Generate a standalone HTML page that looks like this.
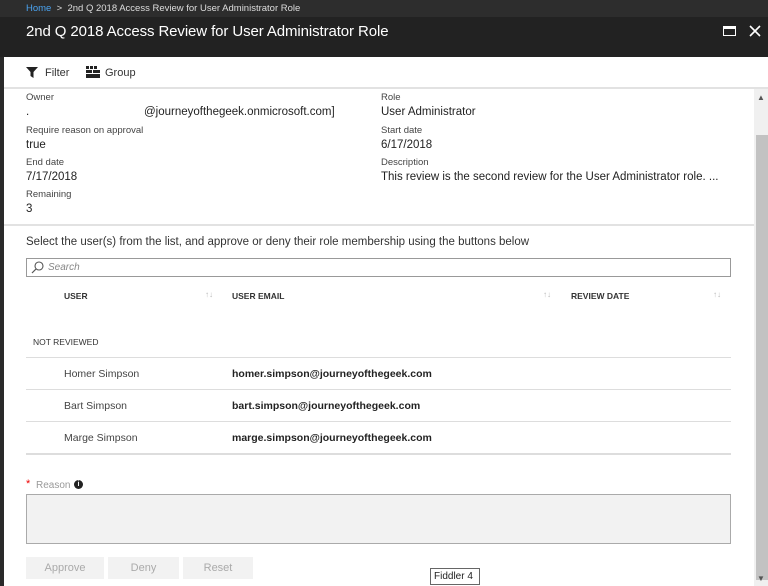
<!DOCTYPE html>
<html><head><style>
*{margin:0;padding:0;box-sizing:border-box}
body{width:768px;height:586px;overflow:hidden;background:#fff;font-family:"Liberation Sans",sans-serif;position:relative;color:#222}
.a{position:absolute;white-space:nowrap}
.lb{font-size:9.5px;color:#444}
.v{font-size:11.5px;color:#222}
.hd{font-size:8.5px;font-weight:bold;color:#333}
.sort{font-size:8px;color:#bbb}
.row{position:absolute;left:26px;width:705px;height:1px;background:#ddd}
.btn{position:absolute;top:557px;height:22px;background:#f2f2f2;color:#aaa;font-size:11px;text-align:center;line-height:22px}
</style></head><body>
<div class="a" style="left:0;top:0;width:768px;height:17px;background:#2d2d2d"></div>
<div class="a" style="left:26px;top:3px;font-size:9.5px;color:#ddd"><span style="color:#4aa3f0">Home</span> &nbsp;&gt;&nbsp; 2nd Q 2018 Access Review for User Administrator Role</div>
<div class="a" style="left:0;top:17px;width:768px;height:40px;background:#222"></div>
<div class="a" style="left:26px;top:23px;font-size:15px;color:#fff;letter-spacing:-0.1px">2nd Q 2018 Access Review for User Administrator Role</div>
<div class="a" style="left:723px;top:26px;width:13px;height:10px;border:1.5px solid #fff;border-top-width:3px"></div>
<svg class="a" style="left:749px;top:25px" width="12" height="12"><path d="M1 1L11 11M11 1L1 11" stroke="#fff" stroke-width="1.6"/></svg>
<div class="a" style="left:0;top:57px;width:4px;height:529px;background:#2a2a2a"></div>
<svg class="a" style="left:26px;top:67px" width="12" height="11"><path d="M0 0H12L7.5 5V11L4.5 9V5Z" fill="#222"/></svg>
<div class="a" style="left:45px;top:67px;font-size:11px;color:#333">Filter</div>
<svg class="a" style="left:86px;top:66px" width="14" height="12"><path d="M0 0h3v3h-3zM4 0h3v3h-3zM8 0h3v3h-3zM0 4h6v3h-6zM7 4h7v3h-7zM0 8h14v4h-14z" fill="#222"/></svg>
<div class="a" style="left:105px;top:67px;font-size:11px;color:#333">Group</div>
<div class="a" style="left:4px;top:87px;width:764px;height:2px;background:#e2e2e2"></div>
<div class="a" style="left:754px;top:89px;width:14px;height:497px;background:#f0f0f0"></div>
<div class="a" style="left:756px;top:135px;width:12px;height:445px;background:#c2c2c2"></div>
<div class="a" style="left:757px;top:93px;font-size:8px;color:#555">▲</div>
<div class="a" style="left:757px;top:574px;font-size:8px;color:#555">▼</div>
<div class="a lb" style="left:26px;top:92px">Owner</div>
<div class="a v" style="left:26px;top:106px">.</div>
<div class="a v" style="left:144px;top:106px">@journeyofthegeek.onmicrosoft.com]</div>
<div class="a lb" style="left:26px;top:125px">Require reason on approval</div>
<div class="a v" style="left:26px;top:139px">true</div>
<div class="a lb" style="left:26px;top:157px">End date</div>
<div class="a v" style="left:26px;top:171px">7/17/2018</div>
<div class="a lb" style="left:26px;top:189px">Remaining</div>
<div class="a v" style="left:26px;top:203px">3</div>
<div class="a lb" style="left:381px;top:92px">Role</div>
<div class="a v" style="left:381px;top:106px">User Administrator</div>
<div class="a lb" style="left:381px;top:125px">Start date</div>
<div class="a v" style="left:381px;top:139px">6/17/2018</div>
<div class="a lb" style="left:381px;top:157px">Description</div>
<div class="a v" style="left:381px;top:171px">This review is the second review for the User Administrator role. ...</div>
<div class="a" style="left:4px;top:224px;width:750px;height:2px;background:#e2e2e2"></div>
<div class="a" style="left:26px;top:236px;font-size:11.5px;color:#333">Select the user(s) from the list, and approve or deny their role membership using the buttons below</div>
<div class="a" style="left:26px;top:258px;width:705px;height:19px;border:1px solid #999"></div>
<svg class="a" style="left:31px;top:261px" width="13" height="13"><circle cx="8" cy="5" r="4" fill="none" stroke="#555" stroke-width="1.1"/><path d="M5 8L1 12" stroke="#555" stroke-width="1.2"/></svg>
<div class="a" style="left:48px;top:262px;font-size:10px;color:#888;font-style:italic">Search</div>
<div class="a hd" style="left:64px;top:291px">USER</div>
<div class="a sort" style="left:205px;top:290px">↑↓</div>
<div class="a hd" style="left:232px;top:291px">USER EMAIL</div>
<div class="a sort" style="left:543px;top:290px">↑↓</div>
<div class="a hd" style="left:571px;top:291px">REVIEW DATE</div>
<div class="a sort" style="left:713px;top:290px">↑↓</div>
<div class="a" style="left:33px;top:337px;font-size:8.5px;color:#333">NOT REVIEWED</div>
<div class="row" style="top:357px"></div>
<div class="a" style="left:64px;top:368px;font-size:10.5px;color:#444">Homer Simpson</div>
<div class="a" style="left:232px;top:368px;font-size:10.5px;color:#222;font-weight:bold">homer.simpson@journeyofthegeek.com</div>
<div class="row" style="top:389px"></div>
<div class="a" style="left:64px;top:400px;font-size:10.5px;color:#444">Bart Simpson</div>
<div class="a" style="left:232px;top:400px;font-size:10.5px;color:#222;font-weight:bold">bart.simpson@journeyofthegeek.com</div>
<div class="row" style="top:421px"></div>
<div class="a" style="left:64px;top:432px;font-size:10.5px;color:#444">Marge Simpson</div>
<div class="a" style="left:232px;top:432px;font-size:10.5px;color:#222;font-weight:bold">marge.simpson@journeyofthegeek.com</div>
<div class="row" style="top:453px;height:2px"></div>
<div class="a" style="left:26px;top:478px;font-size:11px;color:#e00">*</div>
<div class="a" style="left:36px;top:480px;font-size:10px;color:#999">Reason</div>
<div class="a" style="left:74px;top:480px;width:9px;height:9px;border-radius:50%;background:#222;color:#fff;font-size:7px;font-weight:bold;text-align:center;line-height:9px">i</div>
<div class="a" style="left:26px;top:494px;width:705px;height:50px;background:#f2f2f2;border:1px solid #aaa"></div>
<div class="btn" style="left:26px;width:78px">Approve</div>
<div class="btn" style="left:108px;width:71px">Deny</div>
<div class="btn" style="left:183px;width:70px">Reset</div>
<div class="a" style="left:430px;top:568px;width:50px;height:17px;border:1px solid #666;background:#fff;font-size:10px;line-height:15px;padding-left:3px;color:#222">Fiddler 4</div>
</body></html>
